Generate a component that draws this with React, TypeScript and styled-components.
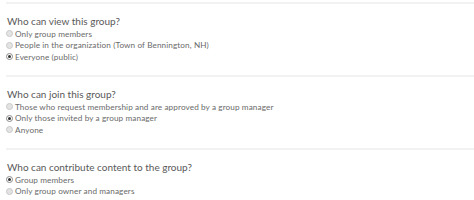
import React, { useState } from "react";
import styled, { createGlobalStyle, css } from "styled-components";

// Interfaces
interface RadioProps {
  checked: boolean;
}

const SECTIONS = [
  {
    id: "view",
    title: "Who can view this group?",
    options: ["Only group members", "People in the organization (Town of Bennington, NH)", "Everyone (public)"],
    selected: 2,
  },
  {
    id: "join",
    title: "Who can join this group?",
    options: [
      "Those who request membership and are approved by a group manager",
      "Only those invited by a group manager",
      "Anyone",
    ],
    selected: 1,
  },
  {
    id: "contribute",
    title: "Who can contribute content to the group?",
    options: ["Group members", "Only group owner and managers"],
    selected: 0,
  },
];

export default function App() {
  const [values, setValues] = useState<Record<string, number>>(
    Object.fromEntries(SECTIONS.map((s) => [s.id, s.selected]))
  );

  return (
    <>
      <GlobalStyle />
      <Page>
        {SECTIONS.map((section) => (
          <Section key={section.id}>
            <Heading>{section.title}</Heading>
            {section.options.map((option, i) => (
              <Option key={option} onClick={() => setValues({ ...values, [section.id]: i })}>
                <Radio checked={values[section.id] === i} />
                {option}
              </Option>
            ))}
          </Section>
        ))}
      </Page>
    </>
  );
}

const GlobalStyle = createGlobalStyle`
  body {
    margin: 0;
    background: #fff;
    font-family: Lato, "Noto Sans", sans-serif;
  }
`;

const Page = styled.div`
  padding: 2px 0 0 6px;
`;

const Section = styled.section`
  border-top: 2px solid #f2f2f2;
  padding: 10px 0 12.5px 0;
`;

const Heading = styled.div`
  font-size: 10px;
  line-height: 14px;
  color: #595959;
  padding-left: 1px;
`;

const Option = styled.label`
  display: flex;
  align-items: center;
  gap: 2px;
  height: 11.5px;
  font-size: 8.2px;
  color: #6a6a6a;
  letter-spacing: 0.1px;
  cursor: pointer;
`;

const Radio = styled.span<RadioProps>`
  position: relative;
  width: 7px;
  height: 7px;
  box-sizing: border-box;
  border-radius: 50%;
  border: 1px solid #c8c8c8;
  background: #e3e3e3;

  ${(props) =>
    props.checked &&
    css`
      background: #fff;
      border-color: #8a8a8a;

      &::after {
        content: "";
        position: absolute;
        left: 1px;
        top: 1px;
        width: 3px;
        height: 3px;
        border-radius: 50%;
        background: #333;
      }
    `}
`;
